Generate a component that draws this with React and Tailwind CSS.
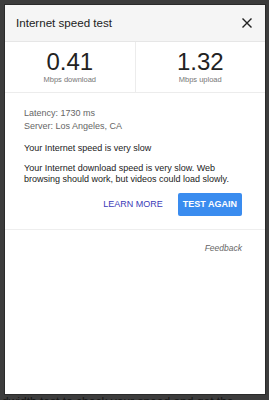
import React from "react";

export default function App() {
  return (
    <div
      className="w-[269px] h-[400px] overflow-hidden bg-[#3c3c3c] pt-[5px] pl-[5px]"
      style={{ fontFamily: '"Liberation Sans", Arial, Helvetica, sans-serif' }}
    >
      <div className="w-[260px] h-[389px] bg-white flex flex-col shadow-[0_0_0_1px_#2a2a2a]">
        {/* Header */}
        <div className="h-[37px] shrink-0 bg-[#f5f5f5] border-b border-[#e6e6e6] flex items-center justify-between pl-[11px] pr-[13px]">
          <span className="text-[11.6px] text-[#222]">Internet speed test</span>
          <svg width="10" height="10" viewBox="0 0 10 10" className="block">
            <path d="M1 1 L9 9 M9 1 L1 9" stroke="#222" strokeWidth="1.4" strokeLinecap="square" />
          </svg>
        </div>

        {/* Speeds */}
        <div className="h-[51px] shrink-0 border-b border-[#ececec] flex">
          <div className="flex-1 border-r border-[#ececec] flex flex-col items-center pt-[10px]">
            <span className="text-[24px] leading-[20px] text-[#222]">0.41</span>
            <span className="mt-[3px] text-[7.5px] leading-[9px] text-[#777]">Mbps download</span>
          </div>
          <div className="flex-1 flex flex-col items-center pt-[10px]">
            <span className="text-[24px] leading-[20px] text-[#222]">1.32</span>
            <span className="mt-[3px] text-[7.5px] leading-[9px] text-[#777]">Mbps upload</span>
          </div>
        </div>

        {/* Body */}
        <div className="shrink-0 border-b border-[#eeeeee] pl-[19px] pr-[23px] pt-[14px] pb-[13px] text-[9px]">
          <div className="leading-[13px] text-[#666]">Latency: 1730 ms</div>
          <div className="leading-[13px] text-[#666]">Server: Los Angeles, CA</div>
          <div className="leading-[11px] text-[#222] mt-[10px]">Your Internet speed is very slow</div>
          <p className="leading-[11px] text-[#222] mt-[9px]">
            Your Internet download speed is very slow. Web browsing should work, but videos could load slowly.
          </p>
          <div className="flex justify-end items-center mt-[8px] gap-[15px]">
            <span className="text-[9px] text-[#3b3bb8]">LEARN MORE</span>
            <span className="h-[23px] px-[5px] flex items-center bg-[#3a8cef] rounded-[2px] text-white font-bold text-[9px]">
              TEST AGAIN
            </span>
          </div>
        </div>

        {/* Feedback */}
        <div className="flex justify-end pr-[23px] pt-[13px]">
          <span className="italic text-[8.5px] leading-[10px] text-[#666]">Feedback</span>
        </div>
      </div>
      <div className="-ml-[3px] mt-[1px] text-[12px] leading-[14px] text-[#161616] whitespace-nowrap">
        dwidth test to check your speed and get the
      </div>
    </div>
  );
}
